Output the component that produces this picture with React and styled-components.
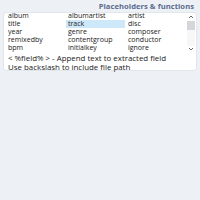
import React from "react";
import styled, { createGlobalStyle } from "styled-components";

const Global = createGlobalStyle`
  html, body { margin: 0; padding: 0; background: #edf0f5; }
  body { font-family: "Open Sans", "Noto Sans", sans-serif; }
`;

const Page = styled.div`
  width: 200px;
  height: 200px;
  background: #edf0f5;
  display: flex;
  flex-direction: column;
  padding: 0 3px;
  box-sizing: border-box;
`;

const Header = styled.div`
  height: 12px;
  display: flex;
  align-items: center;
  justify-content: flex-end;
  padding-right: 3px;
  font-size: 7.6px;
  font-weight: 700;
  color: #5a6c8e;
  letter-spacing: 0.05px;
`;

const Panel = styled.div`
  background: #ffffff;
  border: 1px solid #e2e6ed;
  border-radius: 3px;
  height: 59px;
  box-sizing: border-box;
  display: flex;
  flex-direction: column;
  padding: 0 0 0 1px;
`;

const ListArea = styled.div`
  display: flex;
  height: 39px;
`;

const Grid = styled.div`
  flex: 1;
  display: grid;
  grid-template-columns: 60px 60px 60px;
  grid-auto-rows: 8.1px;
  padding-left: 1px;
  margin-top: -1px;
`;

const Cell = styled.div`
  font-size: 7px;
  line-height: 8.1px;
  color: #222;
  padding-left: 2px;
  margin-right: 1px;
  white-space: nowrap;
  background: ${(p) => (p.$selected ? "#cde8f8" : "transparent")};
`;

const Scrollbar = styled.div`
  width: 9px;
  margin-right: 1px;
  display: flex;
  flex-direction: column;
  align-items: center;
  padding-top: 1px;
`;

const Arrow = styled.svg`
  width: 6px;
  height: 6px;
  display: block;
`;

const Thumb = styled.div`
  width: 8px;
  height: 9px;
  background: #d4d6da;
  margin-top: 1px;
`;

const Track = styled.div`
  flex: 1;
  width: 8px;
  background: #f7f7f7;
`;

const Info = styled.div`
  font-size: 7.9px;
  line-height: 9.4px;
  color: #222;
  padding-left: 3px;
  white-space: nowrap;
`;

const InfoBlock = styled.div`
  margin-top: 1.5px;
`;

const fields = [
  "album", "albumartist", "artist",
  "title", "track", "disc",
  "year", "genre", "composer",
  "remixedby", "contentgroup", "conductor",
  "bpm", "initialkey", "ignore",
];

export default function App() {
  return (
    <>
      <Global />
      <Page>
        <Header>Placeholders &amp; functions</Header>
        <Panel>
          <ListArea>
            <Grid>
              {fields.map((f) => (
                <Cell key={f} $selected={f === "track"}>{f}</Cell>
              ))}
            </Grid>
            <Scrollbar>
              <Arrow viewBox="0 0 6 6">
                <path d="M1 4 L3 2 L5 4" fill="none" stroke="#555" strokeWidth="0.9" />
              </Arrow>
              <Thumb />
              <Track />
              <Arrow viewBox="0 0 6 6">
                <path d="M1 2 L3 4 L5 2" fill="none" stroke="#555" strokeWidth="0.9" />
              </Arrow>
            </Scrollbar>
          </ListArea>
          <InfoBlock>
            <Info>&lt; %field% &gt; - Append text to extracted field</Info>
            <Info>Use backslash to include file path</Info>
          </InfoBlock>
        </Panel>
      </Page>
    </>
  );
}
